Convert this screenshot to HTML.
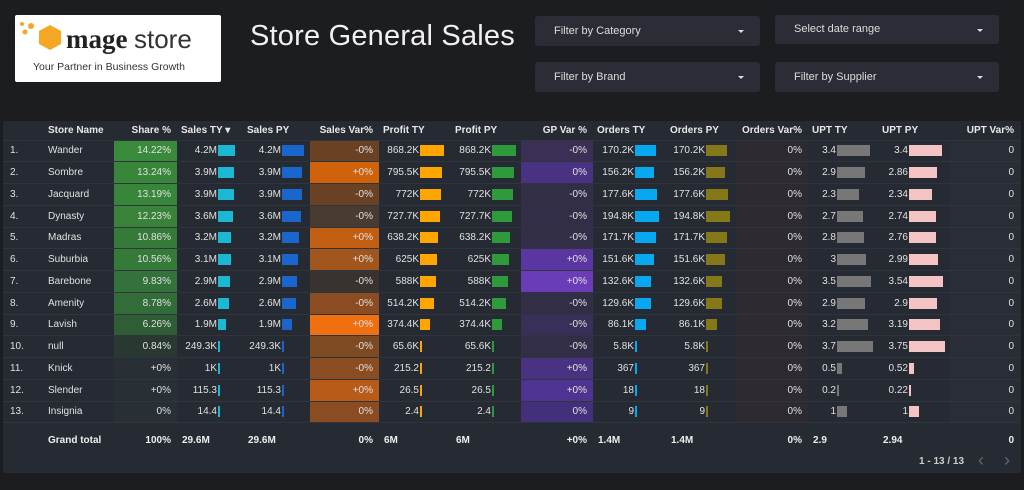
<!DOCTYPE html>
<html><head><meta charset="utf-8"><style>
*{margin:0;padding:0;box-sizing:border-box}
body{width:1024px;height:490px;background:#1c1d21;font-family:"Liberation Sans",sans-serif;color:#e6e6e6;position:relative;overflow:hidden}
.logo{position:absolute;left:15px;top:15px;width:206px;height:67px;background:#fff;border-radius:2px}
.title{position:absolute;left:250px;top:20px;font-size:29px;color:#f0f0f0;letter-spacing:.2px}
.f{position:absolute;background:#2a2d36;border-radius:3px;font-size:11px;color:#ddd;padding-left:19px;line-height:30px}
.f:after{content:"";position:absolute;right:16px;top:14px;border-left:3px solid transparent;border-right:3px solid transparent;border-top:3px solid #ddd}
.panel{position:absolute;left:3px;top:121px;width:1018px;height:352px;background:#262a33;border-radius:2px}
table{border-collapse:collapse;table-layout:fixed;width:1017px;font-size:10px}
th{height:19px;font-weight:bold;text-align:right;padding-right:6px;color:#e8e8e8;white-space:nowrap}
th.l{text-align:left;padding-left:4px}
td{height:21.75px;border-top:1px solid #30343d;text-align:right;padding-right:6px;white-space:nowrap;color:#e0e0e0}
td.n{text-align:left;padding-left:7px}
td.s{text-align:left;padding-left:4px}
td.b{text-align:left;padding:0}
td.b span{display:inline-block;text-align:right;vertical-align:middle}
td.b i{display:inline-block;height:11px;vertical-align:middle;margin-left:1px}
.c1 span{width:40px}.c1 i{background:#1ab8d2}
.c2 span{width:38px}.c2 i{background:#1a66cc}
.c3 span{width:40px}.c3 i{background:#ffa500}
.c4 span{width:40px}.c4 i{background:#2e9a3c}
.c5 span{width:41px}.c5 i{background:#08a8f0}
.c6 span{width:39px}.c6 i{background:#857818}
.c7 span{width:28px}.c7 i{background:#777}
.c8 span{width:30px}.c8 i{background:#f4c4c4}
.ov{background:#2d2a31}.uv{background:#282d36}
tr.g td{border-top:1px solid #30343d;font-weight:bold;height:35px;color:#eee}
tr.g td.b span{width:auto;padding-left:5px}
.pg{position:absolute;left:919px;top:456px;font-size:10px;color:#ccc;font-weight:bold}
.ar{position:absolute;top:450px;font-size:18px;color:#666}
</style></head><body>
<div class="logo">
<svg width="206" height="67" viewBox="0 0 206 67">
<circle cx="7" cy="9" r="2" fill="#f5a623"/><circle cx="16" cy="11" r="3" fill="#f5a623"/><circle cx="10" cy="17" r="2.5" fill="#f5a623"/>
<polygon points="35,10 46,16 46,29 35,35 24,29 24,16" fill="#f5a623"/>
<text x="51" y="33" font-family="Liberation Serif,serif" font-size="27" fill="#222" font-weight="bold">mage</text>
<text x="119" y="33" font-family="Liberation Sans,sans-serif" font-size="26" fill="#333">store</text>
<text x="18" y="55" font-family="Liberation Sans,sans-serif" font-size="10.5" fill="#333">Your Partner in Business Growth</text>
</svg></div>
<div class="title">Store General Sales</div>
<div class="f" style="left:535px;top:16px;width:225px;height:30px">Filter by Category</div>
<div class="f" style="left:775px;top:15px;width:224px;height:29px;line-height:29px">Select date range</div>
<div class="f" style="left:535px;top:62px;width:225px;height:30px">Filter by Brand</div>
<div class="f" style="left:775px;top:62px;width:224px;height:30px">Filter by Supplier</div>
<div class="panel">
<table>
<colgroup><col style="width:41px"><col style="width:70px"><col style="width:63px"><col style="width:66px"><col style="width:67px"><col style="width:69px"><col style="width:72px"><col style="width:70px"><col style="width:72px"><col style="width:73px"><col style="width:70px"><col style="width:72px"><col style="width:70px"><col style="width:72px"><col style="width:70px"></colgroup>
<tr><th></th><th class="l">Store Name</th><th>Share %</th><th class="l">Sales TY &#9662;</th><th class="l">Sales PY</th><th>Sales Var%</th><th class="l">Profit TY</th><th class="l">Profit PY</th><th>GP Var %</th><th class="l">Orders TY</th><th class="l">Orders PY</th><th>Orders Var%</th><th class="l">UPT TY</th><th class="l">UPT PY</th><th>UPT Var%</th></tr>
<tr><td class="n">1.</td><td class="s">Wander</td><td style="background:#3a8a3c">14.22%</td><td class="b c1"><span>4.2M</span><i style="width:17px"></i></td><td class="b c2"><span>4.2M</span><i style="width:22px"></i></td><td style="background:#6b4124">-0%</td><td class="b c3"><span>868.2K</span><i style="width:24px"></i></td><td class="b c4"><span>868.2K</span><i style="width:24px"></i></td><td style="background:#3b2f55">-0%</td><td class="b c5"><span>170.2K</span><i style="width:21px"></i></td><td class="b c6"><span>170.2K</span><i style="width:21px"></i></td><td class="ov">0%</td><td class="b c7"><span>3.4</span><i style="width:33px"></i></td><td class="b c8"><span>3.4</span><i style="width:33px"></i></td><td class="uv">0</td></tr>
<tr><td class="n">2.</td><td class="s">Sombre</td><td style="background:#38863a">13.24%</td><td class="b c1"><span>3.9M</span><i style="width:16px"></i></td><td class="b c2"><span>3.9M</span><i style="width:20px"></i></td><td style="background:#d0620c">+0%</td><td class="b c3"><span>795.5K</span><i style="width:22px"></i></td><td class="b c4"><span>795.5K</span><i style="width:22px"></i></td><td style="background:#4a3282">0%</td><td class="b c5"><span>156.2K</span><i style="width:19px"></i></td><td class="b c6"><span>156.2K</span><i style="width:19px"></i></td><td class="ov">0%</td><td class="b c7"><span>2.9</span><i style="width:28px"></i></td><td class="b c8"><span>2.86</span><i style="width:28px"></i></td><td class="uv">0</td></tr>
<tr><td class="n">3.</td><td class="s">Jacquard</td><td style="background:#38863a">13.19%</td><td class="b c1"><span>3.9M</span><i style="width:16px"></i></td><td class="b c2"><span>3.9M</span><i style="width:20px"></i></td><td style="background:#6b4124">-0%</td><td class="b c3"><span>772K</span><i style="width:21px"></i></td><td class="b c4"><span>772K</span><i style="width:21px"></i></td><td style="background:#332e48">-0%</td><td class="b c5"><span>177.6K</span><i style="width:22px"></i></td><td class="b c6"><span>177.6K</span><i style="width:22px"></i></td><td class="ov">0%</td><td class="b c7"><span>2.3</span><i style="width:22px"></i></td><td class="b c8"><span>2.34</span><i style="width:23px"></i></td><td class="uv">0</td></tr>
<tr><td class="n">4.</td><td class="s">Dynasty</td><td style="background:#38823a">12.23%</td><td class="b c1"><span>3.6M</span><i style="width:15px"></i></td><td class="b c2"><span>3.6M</span><i style="width:19px"></i></td><td style="background:#4a3b32">-0%</td><td class="b c3"><span>727.7K</span><i style="width:20px"></i></td><td class="b c4"><span>727.7K</span><i style="width:20px"></i></td><td style="background:#332e48">-0%</td><td class="b c5"><span>194.8K</span><i style="width:24px"></i></td><td class="b c6"><span>194.8K</span><i style="width:24px"></i></td><td class="ov">0%</td><td class="b c7"><span>2.7</span><i style="width:26px"></i></td><td class="b c8"><span>2.74</span><i style="width:27px"></i></td><td class="uv">0</td></tr>
<tr><td class="n">5.</td><td class="s">Madras</td><td style="background:#357a38">10.86%</td><td class="b c1"><span>3.2M</span><i style="width:13px"></i></td><td class="b c2"><span>3.2M</span><i style="width:17px"></i></td><td style="background:#c25e12">+0%</td><td class="b c3"><span>638.2K</span><i style="width:18px"></i></td><td class="b c4"><span>638.2K</span><i style="width:18px"></i></td><td style="background:#332e48">-0%</td><td class="b c5"><span>171.7K</span><i style="width:21px"></i></td><td class="b c6"><span>171.7K</span><i style="width:21px"></i></td><td class="ov">0%</td><td class="b c7"><span>2.8</span><i style="width:27px"></i></td><td class="b c8"><span>2.76</span><i style="width:27px"></i></td><td class="uv">0</td></tr>
<tr><td class="n">6.</td><td class="s">Suburbia</td><td style="background:#357a38">10.56%</td><td class="b c1"><span>3.1M</span><i style="width:13px"></i></td><td class="b c2"><span>3.1M</span><i style="width:16px"></i></td><td style="background:#a0561c">+0%</td><td class="b c3"><span>625K</span><i style="width:17px"></i></td><td class="b c4"><span>625K</span><i style="width:17px"></i></td><td style="background:#5a36a0">+0%</td><td class="b c5"><span>151.6K</span><i style="width:19px"></i></td><td class="b c6"><span>151.6K</span><i style="width:19px"></i></td><td class="ov">0%</td><td class="b c7"><span>3</span><i style="width:29px"></i></td><td class="b c8"><span>2.99</span><i style="width:29px"></i></td><td class="uv">0</td></tr>
<tr><td class="n">7.</td><td class="s">Barebone</td><td style="background:#33723a">9.83%</td><td class="b c1"><span>2.9M</span><i style="width:12px"></i></td><td class="b c2"><span>2.9M</span><i style="width:15px"></i></td><td style="background:#38332f">-0%</td><td class="b c3"><span>588K</span><i style="width:16px"></i></td><td class="b c4"><span>588K</span><i style="width:16px"></i></td><td style="background:#6a3cb8">+0%</td><td class="b c5"><span>132.6K</span><i style="width:16px"></i></td><td class="b c6"><span>132.6K</span><i style="width:16px"></i></td><td class="ov">0%</td><td class="b c7"><span>3.5</span><i style="width:34px"></i></td><td class="b c8"><span>3.54</span><i style="width:34px"></i></td><td class="uv">0</td></tr>
<tr><td class="n">8.</td><td class="s">Amenity</td><td style="background:#326c38">8.78%</td><td class="b c1"><span>2.6M</span><i style="width:11px"></i></td><td class="b c2"><span>2.6M</span><i style="width:14px"></i></td><td style="background:#8a4c20">-0%</td><td class="b c3"><span>514.2K</span><i style="width:14px"></i></td><td class="b c4"><span>514.2K</span><i style="width:14px"></i></td><td style="background:#332e48">-0%</td><td class="b c5"><span>129.6K</span><i style="width:16px"></i></td><td class="b c6"><span>129.6K</span><i style="width:16px"></i></td><td class="ov">0%</td><td class="b c7"><span>2.9</span><i style="width:28px"></i></td><td class="b c8"><span>2.9</span><i style="width:28px"></i></td><td class="uv">0</td></tr>
<tr><td class="n">9.</td><td class="s">Lavish</td><td style="background:#2f5e36">6.26%</td><td class="b c1"><span>1.9M</span><i style="width:8px"></i></td><td class="b c2"><span>1.9M</span><i style="width:10px"></i></td><td style="background:#f07010">+0%</td><td class="b c3"><span>374.4K</span><i style="width:10px"></i></td><td class="b c4"><span>374.4K</span><i style="width:10px"></i></td><td style="background:#3a2f58">-0%</td><td class="b c5"><span>86.1K</span><i style="width:11px"></i></td><td class="b c6"><span>86.1K</span><i style="width:11px"></i></td><td class="ov">0%</td><td class="b c7"><span>3.2</span><i style="width:31px"></i></td><td class="b c8"><span>3.19</span><i style="width:31px"></i></td><td class="uv">0</td></tr>
<tr><td class="n">10.</td><td class="s">null</td><td style="background:#2a3832">0.84%</td><td class="b c1"><span>249.3K</span><i style="width:2px"></i></td><td class="b c2"><span>249.3K</span><i style="width:2px"></i></td><td style="background:#7e4a22">-0%</td><td class="b c3"><span>65.6K</span><i style="width:2px"></i></td><td class="b c4"><span>65.6K</span><i style="width:2px"></i></td><td style="background:#332e48">-0%</td><td class="b c5"><span>5.8K</span><i style="width:2px"></i></td><td class="b c6"><span>5.8K</span><i style="width:2px"></i></td><td class="ov">0%</td><td class="b c7"><span>3.7</span><i style="width:36px"></i></td><td class="b c8"><span>3.75</span><i style="width:36px"></i></td><td class="uv">0</td></tr>
<tr><td class="n">11.</td><td class="s">Knick</td><td style="background:#293035">+0%</td><td class="b c1"><span>1K</span><i style="width:2px"></i></td><td class="b c2"><span>1K</span><i style="width:2px"></i></td><td style="background:#8a4c20">-0%</td><td class="b c3"><span>215.2</span><i style="width:2px"></i></td><td class="b c4"><span>215.2</span><i style="width:2px"></i></td><td style="background:#4a3282">+0%</td><td class="b c5"><span>367</span><i style="width:2px"></i></td><td class="b c6"><span>367</span><i style="width:2px"></i></td><td class="ov">0%</td><td class="b c7"><span>0.5</span><i style="width:5px"></i></td><td class="b c8"><span>0.52</span><i style="width:5px"></i></td><td class="uv">0</td></tr>
<tr><td class="n">12.</td><td class="s">Slender</td><td style="background:#293035">+0%</td><td class="b c1"><span>115.3</span><i style="width:2px"></i></td><td class="b c2"><span>115.3</span><i style="width:2px"></i></td><td style="background:#b85a18">+0%</td><td class="b c3"><span>26.5</span><i style="width:2px"></i></td><td class="b c4"><span>26.5</span><i style="width:2px"></i></td><td style="background:#4e3390">+0%</td><td class="b c5"><span>18</span><i style="width:2px"></i></td><td class="b c6"><span>18</span><i style="width:2px"></i></td><td class="ov">0%</td><td class="b c7"><span>0.2</span><i style="width:2px"></i></td><td class="b c8"><span>0.22</span><i style="width:2px"></i></td><td class="uv">0</td></tr>
<tr><td class="n">13.</td><td class="s">Insignia</td><td style="background:#293035">0%</td><td class="b c1"><span>14.4</span><i style="width:2px"></i></td><td class="b c2"><span>14.4</span><i style="width:2px"></i></td><td style="background:#8a4c20">0%</td><td class="b c3"><span>2.4</span><i style="width:2px"></i></td><td class="b c4"><span>2.4</span><i style="width:2px"></i></td><td style="background:#42307a">0%</td><td class="b c5"><span>9</span><i style="width:2px"></i></td><td class="b c6"><span>9</span><i style="width:2px"></i></td><td class="ov">0%</td><td class="b c7"><span>1</span><i style="width:10px"></i></td><td class="b c8"><span>1</span><i style="width:10px"></i></td><td class="uv">0</td></tr>
<tr class="g"><td></td><td class="s">Grand total</td><td>100%</td><td class="b"><span>29.6M</span></td><td class="b"><span>29.6M</span></td><td>0%</td><td class="b"><span>6M</span></td><td class="b"><span>6M</span></td><td>+0%</td><td class="b"><span>1.4M</span></td><td class="b"><span>1.4M</span></td><td>0%</td><td class="b"><span>2.9</span></td><td class="b"><span>2.94</span></td><td>0</td></tr>
</table>
</div>
<div class="pg">1 - 13 / 13</div>
<div class="ar" style="left:978px">&#8249;</div>
<div class="ar" style="left:1004px">&#8250;</div>
</body></html>
